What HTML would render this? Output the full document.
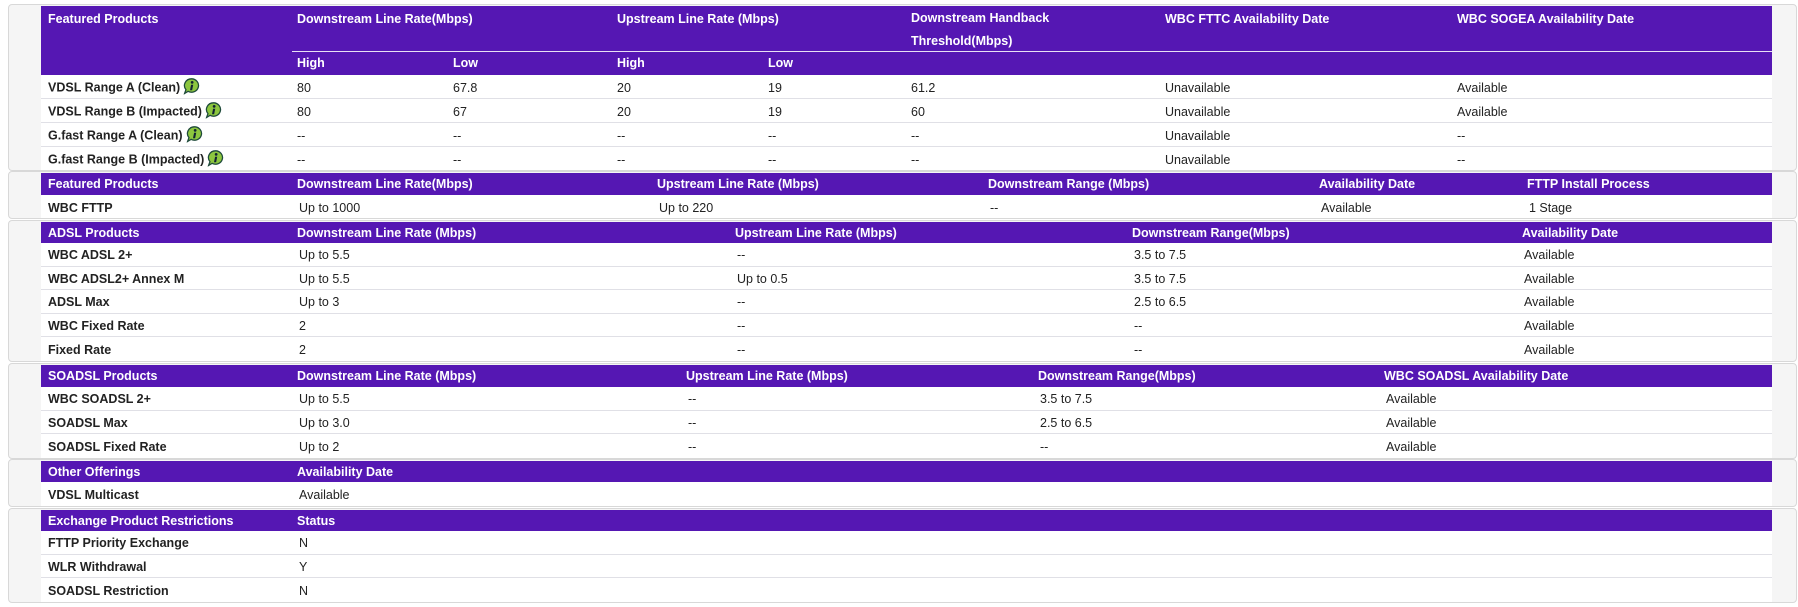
<!DOCTYPE html>
<html><head><meta charset="utf-8"><style>
*{margin:0;padding:0;box-sizing:border-box}
body{width:1798px;height:607px;background:#fff;position:relative;overflow:hidden;font-family:"Liberation Sans",Arial,sans-serif;font-size:12.5px;color:#222}
.pn{position:absolute;left:8px;width:1789px;background:#f5f5f5;border:1px solid #d8d8d8;border-radius:4px}
.hd{position:absolute;left:41px;width:1731px;background:#5517b3;color:#fff;font-weight:bold}
.rw{position:absolute;left:41px;width:1731px;background:#fff;border-bottom:1px solid #e0e0e6}
.c{position:absolute;white-space:nowrap}
.hd .c{top:50%;transform:translateY(-50%)}
.rw .c{top:50%;transform:translateY(-44%)}
.b{font-weight:bold}
.ic{display:inline-block;vertical-align:middle;margin-left:3px;margin-top:-3px}
</style></head><body>

<!-- Panel 1 -->
<div class="pn" style="top:4px;height:167px"></div>
<div class="hd" style="top:6px;height:69px">
  <span class="c" style="left:7px;top:6px;transform:none">Featured Products</span>
  <span class="c" style="left:256px;top:6px;transform:none">Downstream Line Rate(Mbps)</span>
  <span class="c" style="left:576px;top:6px;transform:none">Upstream Line Rate (Mbps)</span>
  <span class="c" style="left:870px;transform:none;line-height:23px;top:1px">Downstream Handback<br>Threshold(Mbps)</span>
  <span class="c" style="left:1124px;top:6px;transform:none">WBC FTTC Availability Date</span>
  <span class="c" style="left:1416px;top:6px;transform:none">WBC SOGEA Availability Date</span>
  <div style="position:absolute;left:251px;right:0;top:45px;height:1px;background:#e8e0f5"></div>
  <span class="c" style="left:256px;top:50px;transform:none">High</span>
  <span class="c" style="left:412px;top:50px;transform:none">Low</span>
  <span class="c" style="left:576px;top:50px;transform:none">High</span>
  <span class="c" style="left:727px;top:50px;transform:none">Low</span>
</div>
<svg width="0" height="0" style="position:absolute"><defs><symbol id="i" viewBox="0 0 16 16"><path d="M8 1.2a6.6 6.3 0 1 1-3.2 11.8L1.5 15l1.3-3.6A6.6 6.3 0 0 1 8 1.2z" fill="#8cc63f" stroke="#1e4a3a" stroke-width="1.2"/><circle cx="8.6" cy="4.6" r="1.3" fill="#123"/><path d="M7.6 6.8h2l-1 5.2h-2z" fill="#123"/></symbol></defs></svg>
<div class="rw" style="top:75px;height:24px"><span class="c b" style="left:7px">VDSL Range A (Clean)<svg class="ic" width="17" height="17"><use href="#i"/></svg></span><span class="c" style="left:256px">80</span><span class="c" style="left:412px">67.8</span><span class="c" style="left:576px">20</span><span class="c" style="left:727px">19</span><span class="c" style="left:870px">61.2</span><span class="c" style="left:1124px">Unavailable</span><span class="c" style="left:1416px">Available</span></div>
<div class="rw" style="top:99px;height:24px"><span class="c b" style="left:7px">VDSL Range B (Impacted)<svg class="ic" width="17" height="17"><use href="#i"/></svg></span><span class="c" style="left:256px">80</span><span class="c" style="left:412px">67</span><span class="c" style="left:576px">20</span><span class="c" style="left:727px">19</span><span class="c" style="left:870px">60</span><span class="c" style="left:1124px">Unavailable</span><span class="c" style="left:1416px">Available</span></div>
<div class="rw" style="top:123px;height:24px"><span class="c b" style="left:7px">G.fast Range A (Clean)<svg class="ic" width="17" height="17"><use href="#i"/></svg></span><span class="c" style="left:256px">--</span><span class="c" style="left:412px">--</span><span class="c" style="left:576px">--</span><span class="c" style="left:727px">--</span><span class="c" style="left:870px">--</span><span class="c" style="left:1124px">Unavailable</span><span class="c" style="left:1416px">--</span></div>
<div class="rw" style="top:147px;height:23px;border-bottom:none"><span class="c b" style="left:7px">G.fast Range B (Impacted)<svg class="ic" width="17" height="17"><use href="#i"/></svg></span><span class="c" style="left:256px">--</span><span class="c" style="left:412px">--</span><span class="c" style="left:576px">--</span><span class="c" style="left:727px">--</span><span class="c" style="left:870px">--</span><span class="c" style="left:1124px">Unavailable</span><span class="c" style="left:1416px">--</span></div>

<!-- Panel 2 -->
<div class="pn" style="top:171px;height:48px"></div>
<div class="hd" style="top:173px;height:22px"><span class="c" style="left:7px">Featured Products</span><span class="c" style="left:256px">Downstream Line Rate(Mbps)</span><span class="c" style="left:616px">Upstream Line Rate (Mbps)</span><span class="c" style="left:947px">Downstream Range (Mbps)</span><span class="c" style="left:1278px">Availability Date</span><span class="c" style="left:1486px">FTTP Install Process</span></div>
<div class="rw" style="top:195px;height:23px;border-bottom:none"><span class="c b" style="left:7px">WBC FTTP</span><span class="c" style="left:258px">Up to 1000</span><span class="c" style="left:618px">Up to 220</span><span class="c" style="left:949px">--</span><span class="c" style="left:1280px">Available</span><span class="c" style="left:1488px">1 Stage</span></div>

<!-- Panel 3 -->
<div class="pn" style="top:220px;height:142px"></div>
<div class="hd" style="top:222px;height:21px"><span class="c" style="left:7px">ADSL Products</span><span class="c" style="left:256px">Downstream Line Rate (Mbps)</span><span class="c" style="left:694px">Upstream Line Rate (Mbps)</span><span class="c" style="left:1091px">Downstream Range(Mbps)</span><span class="c" style="left:1481px">Availability Date</span></div>
<div class="rw" style="top:243px;height:23.5px"><span class="c b" style="left:7px">WBC ADSL 2+</span><span class="c" style="left:258px">Up to 5.5</span><span class="c" style="left:696px">--</span><span class="c" style="left:1093px">3.5 to 7.5</span><span class="c" style="left:1483px">Available</span></div>
<div class="rw" style="top:266.5px;height:23.5px"><span class="c b" style="left:7px">WBC ADSL2+ Annex M</span><span class="c" style="left:258px">Up to 5.5</span><span class="c" style="left:696px">Up to 0.5</span><span class="c" style="left:1093px">3.5 to 7.5</span><span class="c" style="left:1483px">Available</span></div>
<div class="rw" style="top:290px;height:23.5px"><span class="c b" style="left:7px">ADSL Max</span><span class="c" style="left:258px">Up to 3</span><span class="c" style="left:696px">--</span><span class="c" style="left:1093px">2.5 to 6.5</span><span class="c" style="left:1483px">Available</span></div>
<div class="rw" style="top:313.5px;height:23.5px"><span class="c b" style="left:7px">WBC Fixed Rate</span><span class="c" style="left:258px">2</span><span class="c" style="left:696px">--</span><span class="c" style="left:1093px">--</span><span class="c" style="left:1483px">Available</span></div>
<div class="rw" style="top:337px;height:24px;border-bottom:none"><span class="c b" style="left:7px">Fixed Rate</span><span class="c" style="left:258px">2</span><span class="c" style="left:696px">--</span><span class="c" style="left:1093px">--</span><span class="c" style="left:1483px">Available</span></div>

<!-- Panel 4 -->
<div class="pn" style="top:363px;height:96px"></div>
<div class="hd" style="top:365px;height:22px"><span class="c" style="left:7px">SOADSL Products</span><span class="c" style="left:256px">Downstream Line Rate (Mbps)</span><span class="c" style="left:645px">Upstream Line Rate (Mbps)</span><span class="c" style="left:997px">Downstream Range(Mbps)</span><span class="c" style="left:1343px">WBC SOADSL Availability Date</span></div>
<div class="rw" style="top:387px;height:23.5px"><span class="c b" style="left:7px">WBC SOADSL 2+</span><span class="c" style="left:258px">Up to 5.5</span><span class="c" style="left:647px">--</span><span class="c" style="left:999px">3.5 to 7.5</span><span class="c" style="left:1345px">Available</span></div>
<div class="rw" style="top:410.5px;height:23.5px"><span class="c b" style="left:7px">SOADSL Max</span><span class="c" style="left:258px">Up to 3.0</span><span class="c" style="left:647px">--</span><span class="c" style="left:999px">2.5 to 6.5</span><span class="c" style="left:1345px">Available</span></div>
<div class="rw" style="top:434px;height:24px;border-bottom:none"><span class="c b" style="left:7px">SOADSL Fixed Rate</span><span class="c" style="left:258px">Up to 2</span><span class="c" style="left:647px">--</span><span class="c" style="left:999px">--</span><span class="c" style="left:1345px">Available</span></div>

<!-- Panel 5 -->
<div class="pn" style="top:459px;height:48px"></div>
<div class="hd" style="top:461px;height:21px"><span class="c" style="left:7px">Other Offerings</span><span class="c" style="left:256px">Availability Date</span></div>
<div class="rw" style="top:482px;height:24px;border-bottom:none"><span class="c b" style="left:7px">VDSL Multicast</span><span class="c" style="left:258px">Available</span></div>

<!-- Panel 6 -->
<div class="pn" style="top:508px;height:95px"></div>
<div class="hd" style="top:510px;height:21px"><span class="c" style="left:7px">Exchange Product Restrictions</span><span class="c" style="left:256px">Status</span></div>
<div class="rw" style="top:531px;height:23.5px"><span class="c b" style="left:7px">FTTP Priority Exchange</span><span class="c" style="left:258px">N</span></div>
<div class="rw" style="top:554.5px;height:23.5px"><span class="c b" style="left:7px">WLR Withdrawal</span><span class="c" style="left:258px">Y</span></div>
<div class="rw" style="top:578px;height:24px;border-bottom:none"><span class="c b" style="left:7px">SOADSL Restriction</span><span class="c" style="left:258px">N</span></div>
</body></html>
